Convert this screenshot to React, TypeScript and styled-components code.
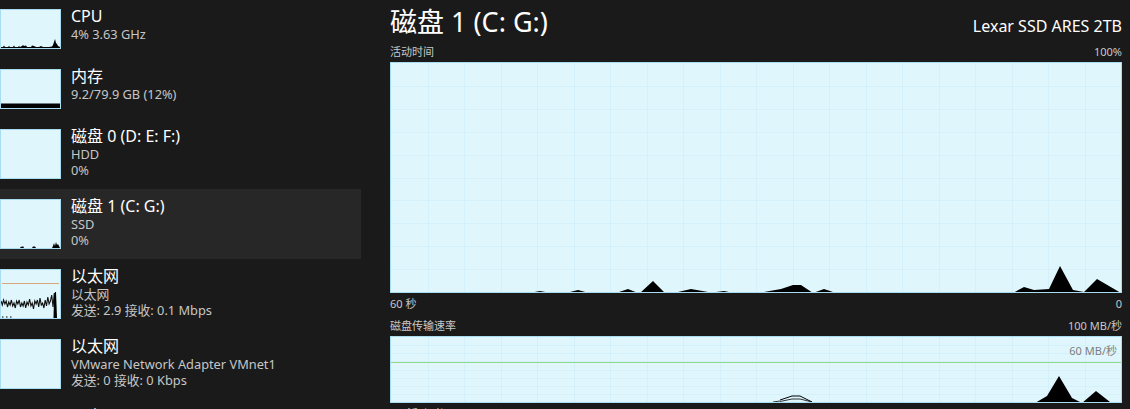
import React from 'react';
import styled, { createGlobalStyle } from 'styled-components';

const GlobalStyle = createGlobalStyle`
  html, body {
    margin: 0;
    padding: 0;
    background: #1a1a1a;
    overflow: hidden;
  }
  body {
    font-family: 'Segoe UI', 'Noto Sans', 'Noto Sans CJK SC', sans-serif;
    color: #fff;
  }
`;

const Window = styled.div`
  display: flex;
  width: 1130px;
  height: 409px;
  overflow: hidden;
  background: #1a1a1a;
`;

const Sidebar = styled.div`
  width: 361px;
  flex: none;
  display: flex;
  flex-direction: column;
  margin-top: -1px;
`;

const Item = styled.div<{ $tall?: boolean; $selected?: boolean }>`
  flex: none;
  display: flex;
  gap: 10px;
  height: ${p => (p.$tall ? 70 : 60)}px;
  padding-top: 10px;
  box-sizing: border-box;
  background: ${p => (p.$selected ? '#272727' : 'transparent')};
`;

const Thumb = styled.div<{ $tall?: boolean }>`
  flex: none;
  width: 61px;
  height: ${p => (p.$tall ? 50 : 40)}px;
  box-sizing: border-box;
  border: 1px solid #a8dcf0;
  background: #dff6fd;

  svg {
    display: block;
    width: 100%;
    height: 100%;
  }
`;

const ItemText = styled.div`
  display: flex;
  flex-direction: column;
  margin-top: -3px;
  min-width: 0;
`;

const ItemTitle = styled.div`
  font-size: 16px;
  line-height: 20px;
  color: #ffffff;
  white-space: nowrap;
`;

const ItemSub = styled.div`
  font-size: 12.8px;
  line-height: 16px;
  color: #c6c6c6;
  white-space: nowrap;
`;

const Main = styled.div`
  flex: 1;
  min-width: 0;
  display: flex;
  flex-direction: column;
  padding: 0 8px 0 29px;
  overflow: hidden;
`;

const Header = styled.div`
  flex: none;
  display: flex;
  justify-content: space-between;
  align-items: baseline;
  height: 44px;
  padding-top: 3px;
  box-sizing: border-box;
`;

const Title = styled.h1`
  margin: 0;
  font-size: 27px;
  font-weight: 400;
  line-height: 38px;
  color: #ffffff;
`;

const Model = styled.div`
  font-size: 16px;
  color: #ffffff;
`;

const AxisRow = styled.div<{ $h: number; $top?: boolean }>`
  flex: none;
  display: flex;
  justify-content: space-between;
  align-items: ${p => (p.$top ? 'flex-start' : 'center')};
  height: ${p => p.$h}px;
  font-size: 11px;
  line-height: 15px;
  color: #c8c8c8;
  white-space: nowrap;
`;

const Chart = styled.div<{ $h: number }>`
  position: relative;
  flex: none;
  height: ${p => p.$h}px;
  box-sizing: border-box;
  border: 1px solid #a8dcf0;
  background: #dff6fd;

  svg {
    display: block;
    width: 100%;
    height: 100%;
  }
`;

const ChartMark = styled.span`
  position: absolute;
  top: 6px;
  right: 4px;
  font-size: 11px;
  line-height: 15px;
  color: #7d7d7d;
`;

const Stats = styled.div`
  flex: none;
  margin-top: 3px;
  padding-left: 17px;
  font-size: 11px;
  line-height: 15px;
  color: #c8c8c8;
`;

// ---- small graphs -------------------------------------------------------

const cpuArea =
  '0,40 0,37 2,37 3,35.5 4,37 7,37 8,36 9,37 12,37 13,35.5 14,37 17,37 18,36 19,37 ' +
  '21,36 22,35 23,36 25,35.5 26,37 30,37 31,35.5 33,36 35,37 38,37 40,36 42,37 48,37 ' +
  '51,36.5 52,35 53,32 54,29 55,33 56,34 57,36 59,37 59,40';

const diskArea =
  '0,48 19,48 20,46.5 21,47 22,46 23,48 31,48 32,46.5 34,46.5 35,48 51,48 52,46 ' +
  '53,43 54,46 55,42 56,45 57,44 58,46 59,48';

const ethY = [
  31, 35, 30, 34, 31, 37, 32, 35, 30, 36, 33, 38, 31, 34, 30, 37, 33, 36, 31, 38,
  32, 35, 29, 36, 33, 39, 31, 34, 30, 37, 28, 35, 33, 38, 30, 36, 27, 34, 31, 25,
  37, 23, 36,
];
const ethLine = ethY.map((y, i) => `${(i * 1.3).toFixed(1)},${y}`).join(' ');

const CpuGraph = () => (
  <svg viewBox="0 0 59 38" preserveAspectRatio="none">
    <polygon points={cpuArea} fill="#000" />
  </svg>
);

const MemGraph = () => (
  <svg viewBox="0 0 59 38" preserveAspectRatio="none">
    <rect x="0" y="33.5" width="59" height="4.5" fill="#000" />
  </svg>
);

const DiskGraph = () => (
  <svg viewBox="0 0 59 48" preserveAspectRatio="none">
    <polygon points={diskArea} fill="#000" />
  </svg>
);

const EthGraph = () => (
  <svg viewBox="0 0 59 48" preserveAspectRatio="none">
    <line x1="1" y1="13.5" x2="58" y2="13.5" stroke="#d9a77c" strokeWidth="1" />
    <polyline points={ethLine} fill="none" stroke="#111" strokeWidth="1.1" />
    <polygon points="52.5,48 53,28 54,22 55,22 56,48" fill="#000" />
    <rect x="1" y="46.5" width="1.5" height="1" fill="#000" />
    <rect x="5" y="46.5" width="1.5" height="1" fill="#000" />
    <rect x="9" y="46.5" width="1.5" height="1" fill="#000" />
  </svg>
);

// ---- big graphs ---------------------------------------------------------

const Grid = ({ w, h, cols, rows }: { w: number; h: number; cols: number; rows: number }) => (
  <g stroke="#d4f0fa" strokeWidth="1" shapeRendering="crispEdges">
    {Array.from({ length: cols - 1 }, (_, i) => {
      const x = Math.round(((i + 1) * w) / cols) + 0.5;
      return <line key={`v${i}`} x1={x} y1={0} x2={x} y2={h} />;
    })}
    {Array.from({ length: rows - 1 }, (_, i) => {
      const y = Math.round(((i + 1) * h) / rows) + 0.5;
      return <line key={`h${i}`} x1={0} y1={y} x2={w} y2={y} />;
    })}
  </g>
);

const activeArea =
  '0,230 138,230 149,228 160,230 175,230 187,227 198,230 225,230 237,226 247,230 ' +
  '249,230 262,218 273,229 287,229 300,226 317,229 325,229 333,228 343,230 350,230 ' +
  '370,229 373,229 390,226 402,222 410,222 422,230 433,226 445,230 450,229 468,229 ' +
  '470,230 622,230 633,224 643,227 658,226 669,203 682,227 693,229 706,216 730,230 730,231 0,231';

const transferArea =
  '644,66 656,59 668,39 681,61 691,66 705,54 719,65 730,66 730,67 644,67';

const ActiveChart = () => (
  <svg viewBox="0 0 730 229" preserveAspectRatio="none">
    <Grid w={730} h={229} cols={20} rows={10} />
    <polygon points={activeArea} fill="#000" />
  </svg>
);

const TransferChart = () => (
  <svg viewBox="0 0 730 65" preserveAspectRatio="none">
    <Grid w={730} h={65} cols={20} rows={8} />
    <line x1="0" y1="25.5" x2="730" y2="25.5" stroke="#93d98a" strokeWidth="1.2" />
    <polyline points="389,63 401,59 409,59 421,65" fill="none" stroke="#000" strokeWidth="1" />
    <polyline points="389,64.5 401,62 409,62 421,65" fill="none" stroke="#000" strokeWidth="0.8" />
    <polyline points="382,65 389,64" fill="none" stroke="#000" strokeWidth="0.8" />
    <polygon points={transferArea} fill="#000" />
  </svg>
);

type Row = {
  title: string;
  lines: string[];
  graph?: React.ReactNode;
  selected?: boolean;
};

const rows: Row[] = [
  { title: 'CPU', lines: ['4% 3.63 GHz'], graph: <CpuGraph /> },
  { title: '内存', lines: ['9.2/79.9 GB (12%)'], graph: <MemGraph /> },
  { title: '磁盘 0 (D: E: F:)', lines: ['HDD', '0%'] },
  { title: '磁盘 1 (C: G:)', lines: ['SSD', '0%'], graph: <DiskGraph />, selected: true },
  { title: '以太网', lines: ['以太网', '发送: 2.9 接收: 0.1 Mbps'], graph: <EthGraph /> },
  { title: '以太网', lines: ['VMware Network Adapter VMnet1', '发送: 0 接收: 0 Kbps'] },
  { title: '以太网', lines: ['VMware Network Adapter VMnet8', '发送: 0 接收: 0 Kbps'] },
];

export default function App() {
  return (
    <>
      <GlobalStyle />
      <Window>
        <Sidebar>
          {rows.map((r, i) => {
            const tall = r.lines.length > 1;
            return (
              <Item key={i} $tall={tall} $selected={r.selected}>
                <Thumb $tall={tall}>{r.graph}</Thumb>
                <ItemText>
                  <ItemTitle>{r.title}</ItemTitle>
                  {r.lines.map((l, j) => (
                    <ItemSub key={j}>{l}</ItemSub>
                  ))}
                </ItemText>
              </Item>
            );
          })}
        </Sidebar>
        <Main>
          <Header>
            <Title>磁盘 1 (C: G:)</Title>
            <Model>Lexar SSD ARES 2TB</Model>
          </Header>
          <AxisRow $h={18} $top>
            <span>活动时间</span>
            <span>100%</span>
          </AxisRow>
          <Chart $h={231}>
            <ActiveChart />
          </Chart>
          <AxisRow $h={21}>
            <span>60 秒</span>
            <span>0</span>
          </AxisRow>
          <AxisRow $h={22}>
            <span>磁盘传输速率</span>
            <span>100 MB/秒</span>
          </AxisRow>
          <Chart $h={67}>
            <TransferChart />
            <ChartMark>60 MB/秒</ChartMark>
          </Chart>
          <Stats>活动时间</Stats>
        </Main>
      </Window>
    </>
  );
}
